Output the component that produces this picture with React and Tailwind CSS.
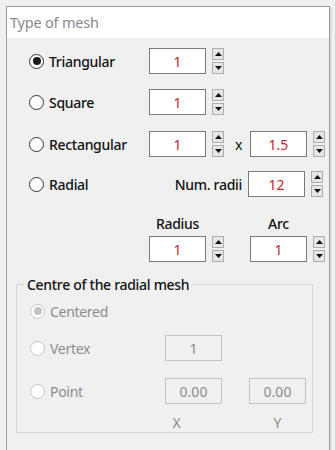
import React from "react";

const Radio = ({ checked, disabled }) => (
  <span
    className={`flex h-[15px] w-[15px] shrink-0 items-center justify-center rounded-full border-[1.5px] bg-white ${
      disabled ? "border-[#c4c4c4]" : "border-[#333333]"
    }`}
  >
    {checked && (
      <span className={`h-[8px] w-[8px] rounded-full ${disabled ? "bg-[#c4c4c4]" : "bg-[#1a1a1a]"}`} />
    )}
  </span>
);

const Spinner = () => (
  <div className="ml-[6px] flex flex-col gap-[2px]">
    <div className="flex h-[12px] w-[12px] items-center justify-center border border-[#adadad] bg-[#e6e6e6]">
      <svg width="7" height="4" viewBox="0 0 7 4">
        <path d="M0 4 L3.5 0 L7 4 Z" fill="#111" />
      </svg>
    </div>
    <div className="flex h-[12px] w-[12px] items-center justify-center border border-[#adadad] bg-[#e6e6e6]">
      <svg width="7" height="4" viewBox="0 0 7 4">
        <path d="M0 0 L7 0 L3.5 4 Z" fill="#111" />
      </svg>
    </div>
  </div>
);

const NumBox = ({ value, disabled }) => (
  <div
    className={`flex h-[26px] w-[57px] items-center justify-center border text-[14px] ${
      disabled
        ? "border-[#c4c4c4] bg-[#f0f0f0] text-[#8c8c8c]"
        : "border-[#7a7a7a] bg-white text-[#c0282d]"
    }`}
  >
    {value}
  </div>
);

const Option = ({ label, checked, disabled }) => (
  <div className="flex w-[120px] items-center gap-[5px]">
    <Radio checked={checked} disabled={disabled} />
    <span
      className={`text-[14px] tracking-[-0.3px] ${disabled ? "text-[#8c8c8c]" : "font-medium text-[#111]"}`}
    >
      {label}
    </span>
  </div>
);

const Labeled = ({ label, value }) => (
  <div className="flex flex-col gap-[3px]">
    <span className="w-[57px] text-center text-[14px] font-medium leading-[18px] tracking-[-0.3px] text-[#111]">
      {label}
    </span>
    <div className="flex items-center">
      <NumBox value={value} />
      <Spinner />
    </div>
  </div>
);

export default function App() {
  return (
    <div
      className="h-[450px] w-[335px] overflow-hidden bg-[#f0f0f0] pl-[6px] pr-[5px] pt-[6px]"
      style={{ fontFamily: '"Noto Sans", "Open Sans", sans-serif' }}
    >
      <div className="h-[460px] border border-[#9a9a9a] bg-[#f0f0f0] shadow-[1px_1px_2px_rgba(0,0,0,0.15)]">
        <div className="flex h-[31px] items-center bg-white pl-[3px] text-[14.5px] tracking-[-0.2px] text-[#8a8a8a]">
          Type of mesh
        </div>
        <div className="pl-[22px] pt-[10px]">
          <div className="flex h-[26px] items-center">
            <Option label="Triangular" checked />
            <NumBox value="1" />
            <Spinner />
          </div>
          <div className="mt-[15px] flex h-[26px] items-center">
            <Option label="Square" />
            <NumBox value="1" />
            <Spinner />
          </div>
          <div className="mt-[16px] flex h-[26px] items-center">
            <Option label="Rectangular" />
            <NumBox value="1" />
            <Spinner />
            <span className="w-[26px] pl-[11px] text-[14px] text-[#111]">x</span>
            <NumBox value="1.5" />
            <Spinner />
          </div>
          <div className="mt-[14px] flex h-[26px] items-center">
            <Option label="Radial" />
            <span className="w-[99px] pr-[6px] text-right text-[14px] font-medium tracking-[-0.3px] text-[#111]">
              Num. radii
            </span>
            <NumBox value="12" />
            <Spinner />
          </div>
          <div className="mt-[18px] flex gap-[26px] pl-[120px]">
            <Labeled label="Radius" value="1" />
            <Labeled label="Arc" value="1" />
          </div>
        </div>
        <fieldset className="ml-[9px] mt-[12px] h-[159px] w-[297px] border border-[#d5d5d5] px-0 pb-0 pt-0">
          <legend className="ml-[7px] px-[3px] text-[14px] font-medium tracking-[-0.3px] text-[#111]">
            Centre of the radial mesh
          </legend>
          <div className="pl-[13px] pt-[3px]">
            <div className="flex h-[26px] items-center">
              <Option label="Centered" checked disabled />
            </div>
            <div className="mt-[11px] flex h-[26px] items-center">
              <Option label="Vertex" disabled />
              <div className="ml-[15px]">
                <NumBox value="1" disabled />
              </div>
            </div>
            <div className="mt-[17px] flex h-[26px] items-center">
              <Option label="Point" disabled />
              <div className="ml-[15px]">
                <NumBox value="0.00" disabled />
              </div>
              <div className="ml-[27px]">
                <NumBox value="0.00" disabled />
              </div>
            </div>
            <div className="mt-[8px] flex text-[14px] text-[#8c8c8c]">
              <span className="ml-[118px] w-[57px] text-center">X</span>
              <span className="ml-[44px] w-[57px] text-center">Y</span>
            </div>
          </div>
        </fieldset>
      </div>
    </div>
  );
}
